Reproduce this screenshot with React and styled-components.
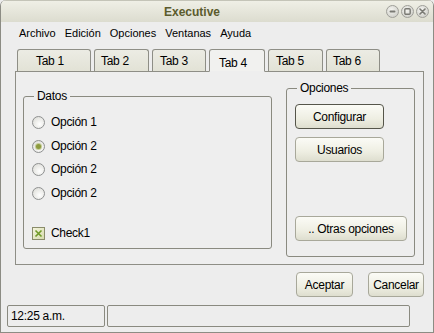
import React from "react";
import styled, { createGlobalStyle } from "styled-components";

const Global = createGlobalStyle`
  html, body { margin:0; padding:0; background:#ececec; }
  body { font-family:"Liberation Sans", Arial, sans-serif; font-size:11.5px; color:#000; }
`;

const Window = styled.div`
  width:434px;
  height:333px;
  box-sizing:border-box;
  background:#ededed;
  border:1px solid #8c8c84;
  border-top:none;
  border-radius:6px 6px 0 0;
  display:flex;
  flex-direction:column;
  overflow:hidden;
`;

const TitleBar = styled.div`
  height:21px;
  flex:none;
  position:relative;
  display:flex;
  align-items:center;
  justify-content:center;
  background:linear-gradient(#efefe6, #dcdccf);
  border-top:1px solid #c4c4b8;
`;

const Title = styled.div`
  font-weight:bold;
  font-size:12px;
  color:#5b5b2e;
  margin-left:-50px;
`;

const Controls = styled.div`
  position:absolute;
  right:4px;
  top:4px;
  display:flex;
  gap:2px;
`;

const CtlBtn = styled.div`
  width:13px;
  height:13px;
  border-radius:50%;
  box-sizing:border-box;
  border:1px solid #9e9e98;
  background:radial-gradient(circle at 40% 35%, #f4f4f0, #c8c8c2);
  display:flex;
  align-items:center;
  justify-content:center;
`;

const MenuBar = styled.div`
  height:21px;
  flex:none;
  display:flex;
  align-items:center;
  padding-left:18px;
  gap:9px;
  font-size:11px;
`;

const Body = styled.div`
  flex:1;
  display:flex;
  flex-direction:column;
  padding:6px 9px 0 14px;
  letter-spacing:-0.3px;
`;

const TabRow = styled.div`
  display:flex;
  gap:3px;
  padding-left:2px;
  height:22px;
  position:relative;
  z-index:1;
`;

const Tab = styled.div`
  width:${p => p.$w}px;
  box-sizing:border-box;
  padding-left:${p => p.$pad}px;
  padding-top:${p => (p.$active ? 6 : 4)}px;
  border:1px solid #8e8e86;
  border-bottom:${p => (p.$active ? "1px solid #eeeeee" : "none")};
  border-radius:3px 3px 0 0;
  background:${p => (p.$active ? "#f1f1ef" : "linear-gradient(#ecece4, #e2e2d6)")};
  height:${p => (p.$active ? 23 : 22)}px;
  font-size:12px;
`;

const Panel = styled.div`
  height:194px;
  box-sizing:border-box;
  border:1px solid #8e8e86;
  background:#eeeeee;
  display:flex;
  align-items:flex-start;
  padding-left:7px;
  gap:14px;
`;

const Group = styled.fieldset`
  margin:${p => p.$top}px 0 0 0;
  padding:0;
  width:${p => p.$w}px;
  height:${p => p.$h}px;
  box-sizing:border-box;
  border:1px solid #8a8a80;
  border-radius:3px;
  position:relative;
  display:flex;
  flex-direction:column;
`;

const Legend = styled.legend`
  font-size:12px;
  padding:0 3px;
  margin-left:10px;
  line-height:12px;
`;

const OptRow = styled.div`
  display:flex;
  align-items:center;
  gap:6px;
  height:12px;
  margin-left:8px;
  margin-top:${p => p.$mt}px;
  font-size:12px;
`;

const Radio = styled.div`
  width:13px;
  height:13px;
  box-sizing:border-box;
  border-radius:50%;
  border:1px solid #8e9090;
  background:radial-gradient(circle at 60% 65%, #ffffff, #d8d8d2);
  display:flex;
  align-items:center;
  justify-content:center;
  &::after {
    content:"";
    display:${p => (p.$checked ? "block" : "none")};
    width:5px;
    height:5px;
    border-radius:50%;
    background:#8c9a3e;
    box-shadow:0 0 0 1px #c4cc98;
  }
`;

const Check = styled.div`
  width:13px;
  height:13px;
  box-sizing:border-box;
  border:1px solid #8a8c6a;
  background:linear-gradient(135deg, #f4f4dc, #d6dcae);
  display:flex;
  align-items:center;
  justify-content:center;
`;

const Button = styled.div`
  width:${p => p.$w}px;
  height:25px;
  box-sizing:border-box;
  border:1px solid ${p => (p.$def ? "#55554a" : "#a8a89a")};
  border-radius:4px;
  background:linear-gradient(#fbfbf6, #eeeee2 60%, #dedecf);
  display:flex;
  align-items:center;
  justify-content:center;
  font-size:12px;
  margin-left:8px;
  margin-top:${p => p.$mt || 0}px;
`;

const Footer = styled.div`
  display:flex;
  justify-content:flex-end;
  gap:15px;
  margin-top:7px;
  height:25px;
`;

const FootButton = styled(Button)`
  margin:0;
`;

const StatusBar = styled.div`
  display:flex;
  gap:2px;
  margin:8px 0 0 -8px;
`;

const StatusField = styled.div`
  width:${p => p.$w}px;
  height:22px;
  box-sizing:border-box;
  border:1px solid #8a8a80;
  border-radius:2px;
  display:flex;
  align-items:center;
  padding-left:3px;
  font-size:12px;
`;

const tabs = [
  { label: "Tab 1", w: 74, pad: 18 },
  { label: "Tab 2", w: 55, pad: 6 },
  { label: "Tab 3", w: 54, pad: 7 },
  { label: "Tab 4", w: 56, pad: 9, active: true },
  { label: "Tab 5", w: 55, pad: 7 },
  { label: "Tab 6", w: 54, pad: 6 },
];

const App = () => (
  <>
    <Global />
    <Window>
      <TitleBar>
        <Title>Executive</Title>
        <Controls>
          <CtlBtn>
            <svg width="7" height="7" viewBox="0 0 7 7"><rect x="0.5" y="2.5" width="6" height="2" rx="1" fill="#7a7a74" /></svg>
          </CtlBtn>
          <CtlBtn>
            <svg width="7" height="7" viewBox="0 0 7 7"><rect x="0.8" y="0.8" width="5.4" height="5.4" rx="1" fill="none" stroke="#7a7a74" strokeWidth="1.4" /></svg>
          </CtlBtn>
          <CtlBtn>
            <svg width="7" height="7" viewBox="0 0 7 7"><path d="M1 1L6 6M6 1L1 6" stroke="#7a7a74" strokeWidth="1.6" strokeLinecap="round" /></svg>
          </CtlBtn>
        </Controls>
      </TitleBar>
      <MenuBar>
        <span>Archivo</span>
        <span>Edición</span>
        <span>Opciones</span>
        <span>Ventanas</span>
        <span>Ayuda</span>
      </MenuBar>
      <Body>
        <TabRow>
          {tabs.map(t => (
            <Tab key={t.label} $w={t.w} $pad={t.pad} $active={t.active}>{t.label}</Tab>
          ))}
        </TabRow>
        <Panel>
          <Group $top={18} $w={249} $h={159}>
            <Legend>Datos</Legend>
            <OptRow $mt={14}><Radio />Opción 1</OptRow>
            <OptRow $mt={12}><Radio $checked />Opción 2</OptRow>
            <OptRow $mt={11}><Radio />Opción 2</OptRow>
            <OptRow $mt={12}><Radio />Opción 2</OptRow>
            <OptRow $mt={28}>
              <Check>
                <svg width="9" height="9" viewBox="0 0 9 9"><path d="M1.5 1.5L7.5 7.5M7.5 1.5L1.5 7.5" stroke="#6f9a26" strokeWidth="1.6" /></svg>
              </Check>
              Check1
            </OptRow>
          </Group>
          <Group $top={10} $w={129} $h={175}>
            <Legend>Opciones</Legend>
            <Button $w={89} $def $mt={10}>Configurar</Button>
            <Button $w={89} $mt={8}>Usuarios</Button>
            <Button $w={112} $mt={54}>.. Otras opciones</Button>
          </Group>
        </Panel>
        <Footer>
          <FootButton $w={57}>Aceptar</FootButton>
          <FootButton $w={56}>Cancelar</FootButton>
        </Footer>
        <StatusBar>
          <StatusField $w={98}>12:25 a.m.</StatusField>
          <StatusField $w={303} />
        </StatusBar>
      </Body>
    </Window>
  </>
);

export default App;
